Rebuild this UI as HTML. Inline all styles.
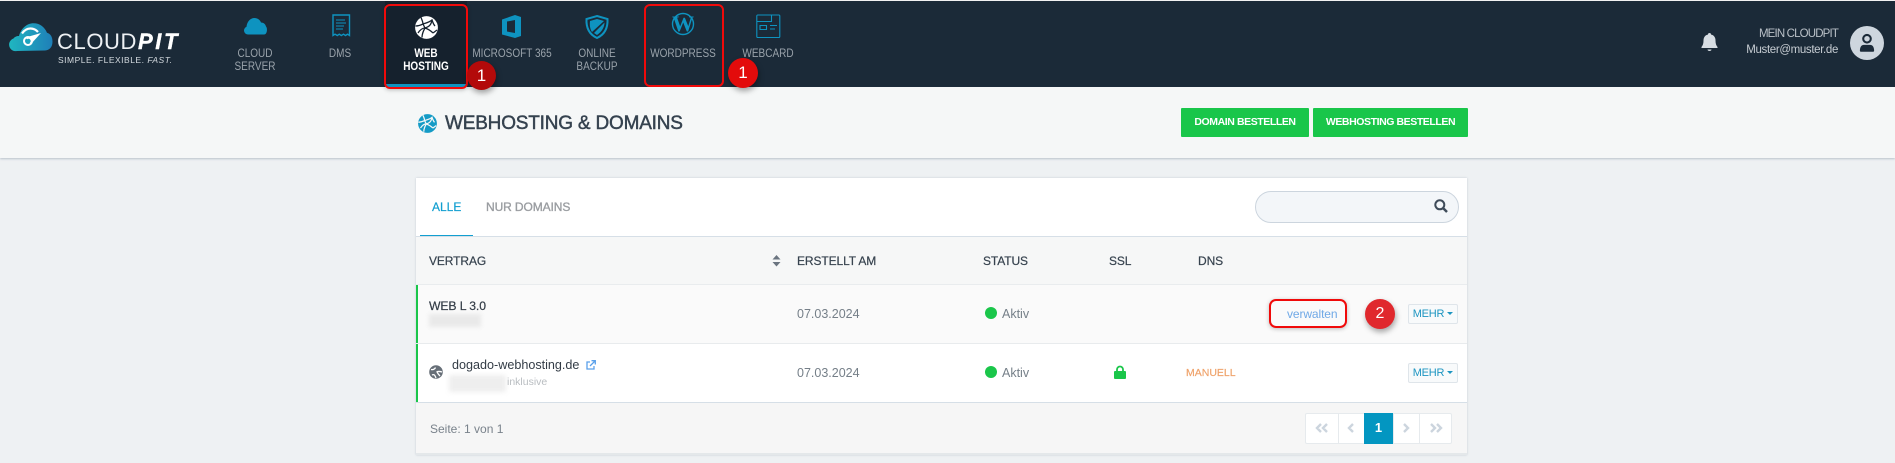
<!DOCTYPE html>
<html lang="de"><head><meta charset="utf-8"><title>Webhosting</title>
<style>
html,body{margin:0;padding:0;width:1895px;height:463px;overflow:hidden;background:#eef1f3;font-family:"Liberation Sans",sans-serif}
.a{position:absolute}
.t{position:absolute;white-space:nowrap}
.c{transform:translateX(-50%);text-align:center}
.nav{font-size:11.5px;color:#9aa3ab;line-height:13px;top:47.5px;transform:translateX(-50%) scaleX(.87);text-align:center}
svg{position:absolute;overflow:visible}
.th{font-size:12px;color:#36424e;top:254px;letter-spacing:-.1px;-webkit-text-stroke:.2px #36424e}
.d{font-size:12.5px;color:#757f88}
.badge{position:absolute;border-radius:50%;color:#fff;text-align:center;box-shadow:1px 3px 6px rgba(0,0,0,.35);font-size:17px}
.btn{position:absolute;background:#19c64a;color:#fff;font-weight:bold;font-size:10.5px;text-align:center;border-radius:1px;top:108px;height:29px;line-height:28px;letter-spacing:-.42px}
.mehr{position:absolute;left:1408px;width:50px;height:20px;box-sizing:border-box;border:1px solid #dfe5ea;border-radius:2px;background:#f8fafb;color:#1d95c1;font-size:11px;line-height:18px;text-align:center;letter-spacing:-.2px}
.mehr i{display:inline-block;border:3px solid transparent;border-top-color:#1d95c1;border-bottom:0;margin-left:3px;vertical-align:2px}
.redbox{position:absolute;border:2px solid #f00a0a;border-radius:6px;box-sizing:border-box;box-shadow:0 1px 4px rgba(0,0,0,.25)}
</style></head><body>
<div class="a" style="left:0;top:0;width:1895px;height:1px;background:#f2f2f2"></div>
<div class="a" style="left:0;top:1px;width:1895px;height:86px;background:#1b2a38"></div>
<div class="a" style="left:0;top:87px;width:1895px;height:71px;background:#f5f7f7;box-shadow:0 1px 2px rgba(90,110,130,.35)"></div>

<!-- logo -->
<svg style="left:0;top:0" width="190" height="70" viewBox="0 0 190 70">
<defs><linearGradient id="g" x1="0" y1="0" x2="1" y2="0"><stop offset="0" stop-color="#1fb6c0"/><stop offset="1" stop-color="#1f7fb8"/></linearGradient></defs>
<path d="M17 51a6.500 6.500 0 0 1-3.500-12.500c1-1.500 3-2.500 5.500-2.500 2-7.500 8-12.700 14.500-12.700 6.500 0 11 3.700 13.500 9.500 3.500 1 5.500 4 5.500 9 0 5-3 8.700-7.500 8.700z" fill="url(#g)"/>
<path d="M22 33.500c2-3 5-5 8.500-5 3 0 5.500 1.200 7.500 3.500" fill="none" stroke="#fff" stroke-width="2.200"/>
<circle cx="28" cy="41" r="4" fill="none" stroke="#fff" stroke-width="2"/>
<path d="M41 33 25.500 37.500l5.500 6.500z" fill="#fff"/><circle cx="28.500" cy="41" r="2.200" fill="#1da5bd"/>
</svg>
<div class="t" style="left:57px;top:29px;font-size:22px;color:#eef1f4;letter-spacing:.6px;line-height:26px">CLOUD</div>
<div class="t" style="left:138px;top:29px;font-size:22px;color:#fff;font-weight:bold;font-style:italic;letter-spacing:2.6px;line-height:26px;-webkit-text-stroke:.4px #fff">PIT</div>
<div class="t" style="left:58px;top:55px;font-size:8.500px;color:#d5dbe0;letter-spacing:.5px;line-height:11px">SIMPLE. FLEXIBLE. <i>FAST.</i></div>

<!-- nav active -->
<div class="a" style="left:385px;top:1px;width:82px;height:83px;background:#15212d"></div>
<div class="a" style="left:385px;top:84px;width:82px;height:3px;background:#0e93c0"></div>
<div class="redbox" style="left:384px;top:4px;width:84px;height:85px"></div>
<div class="redbox" style="left:644px;top:4px;width:80px;height:83px;box-shadow:none"></div>

<!-- nav icons -->
<svg style="left:244px;top:17px" width="24" height="18" viewBox="0 0 24 18"><path d="M4 17.500a4 4 0 0 1-1.500-7.700C3 5 6 1 10.500 1c3 0 5.500 1.800 6.500 4.500 3 0 4.500 2 5 4 1.500 1 1.500 8-2 8z" fill="#0e93c0"/></svg>
<svg style="left:331px;top:14px" width="20" height="24" viewBox="0 0 20 24" fill="none" stroke="#0e93c0"><path d="M2 1h16.500v20.500l-2-1.300-2 1.300-2-1.300-2.200 1.300-2-1.300-2 1.300-2.300-1.300-2 1.300z" stroke-width="1.400"/><path d="M5 6h9M5 9h10M5 12h8M5 15h7" stroke-width="1"/></svg>
<svg style="left:415px;top:16px" width="23" height="23" viewBox="0 0 23 23"><circle cx="11.500" cy="11.500" r="11.400" fill="#fff"/><g fill="none" stroke="#15212d" stroke-width="1.300"><path d="M6 1.500C7 4 8 6 8 8 6 9 3 10 .5 10"/><path d="M8 8c3-1 7-2 9-4 1 3 2 5 3 6"/><path d="M3 17c2-3 4-5 7-5 3 1 6 3 8 5"/><path d="M8 8l2 4c3-1 6-2 7-8"/><path d="M7 21.500c0-3 1-6 3-9.500"/><path d="M18 17l4-3"/></g></svg>
<svg style="left:501px;top:15px" width="21" height="23" viewBox="0 0 21 23"><path fill-rule="evenodd" d="M1 4.500 14 0l6 2v19l-6 2-13-3.500zM6 6.500v10l8 1.500V5z" fill="#0e93c0"/></svg>
<svg style="left:585px;top:15px" width="24" height="24" viewBox="0 0 24 24"><path d="M12 1 22.500 4c.5 9-3 15.500-10.500 19C4.500 19.500 1 13 1.500 4z" fill="none" stroke="#0e93c0" stroke-width="2"/><path d="M5 6 12 4l7 2-12 11c-2-3-2.500-7-2-11zM19.500 7.500c0 4.500-2.500 9-7.500 12.500l-3-2z" fill="#0e93c0"/></svg>
<svg style="left:671px;top:12px" width="24" height="24" viewBox="0 0 24 24"><circle cx="12" cy="12" r="10.500" fill="none" stroke="#0e93c0" stroke-width="1.400"/></svg>
<div class="t c" style="left:683px;top:10px;font:bold 22px/28px 'Liberation Serif',serif;color:#0e93c0">W</div>
<svg style="left:756px;top:14px" width="25" height="25" viewBox="0 0 25 25" fill="none" stroke="#0e93c0" stroke-width="1.100"><rect x=".8" y="1" width="23" height="22.500" rx="1"/><path d="M1 7.500h14.500V1M4 11.500h6.500v4H4zM14 11.500h7M14 15h5"/></svg>

<!-- nav labels -->
<div class="t nav" style="left:255px;">CLOUD<br>SERVER</div>
<div class="t nav" style="left:340px;">DMS</div>
<div class="t nav" style="left:426px;color:#fff;font-weight:bold">WEB<br>HOSTING</div>
<div class="t nav" style="left:512px;">MICROSOFT 365</div>
<div class="t nav" style="left:597px;">ONLINE<br>BACKUP</div>
<div class="t nav" style="left:683px;">WORDPRESS</div>
<div class="t nav" style="left:768px;">WEBCARD</div>

<div class="badge" style="left:467px;top:61px;width:29px;height:29px;line-height:29px;background:#b30a0a">1</div>
<div class="badge" style="left:728px;top:58px;width:30px;height:30px;line-height:30px;background:#e30b0b">1</div>

<!-- right nav -->
<svg style="left:1701px;top:33px" width="17" height="19" viewBox="0 0 17 19"><path d="M8.500 0c1 0 1.500.6 1.500 1.500 3 .7 4.500 3 4.500 6 0 3 .7 5 2 6.500v1H.5v-1c1.300-1.500 2-3.500 2-6.500 0-3 1.500-5.300 4.500-6C7 .6 7.500 0 8.500 0zM6.500 16.500h4c0 1-1 1.500-2 1.500s-2-.5-2-1.500z" fill="#d7dde3"/></svg>
<div class="t" style="right:57px;top:27px;font-size:11.500px;color:#b9c0c7;letter-spacing:-.85px;line-height:14px">MEIN CLOUDPIT</div>
<div class="t" style="right:57px;top:43px;font-size:11.500px;color:#c6ccd2;letter-spacing:-.35px;line-height:14px">Muster@muster.de</div>
<div class="a" style="left:1850px;top:26px;width:34px;height:34px;border-radius:50%;background:#ced6de"></div>
<svg style="left:1859px;top:34px" width="16" height="18" viewBox="0 0 16 19"><circle cx="8" cy="5" r="4" fill="none" stroke="#1b2a38" stroke-width="2.200"/><path d="M.5 17.500c0-4 2-6 4-6h7c2 0 4 2 4 6 0 .7-.5 1.200-1 1.200H1.500c-.5 0-1-.5-1-1.200z" fill="#1b2a38"/></svg>

<!-- sub header -->
<svg style="left:418px;top:114px" width="19" height="19" viewBox="0 0 23 23"><circle cx="11.500" cy="11.500" r="11.400" fill="#149bc6"/><g fill="none" stroke="#f5f7f7" stroke-width="1.500"><path d="M6 1.500C7 4 8 6 8 8 6 9 3 10 .5 10"/><path d="M8 8c3-1 7-2 9-4 1 3 2 5 3 6"/><path d="M3 17c2-3 4-5 7-5 3 1 6 3 8 5"/><path d="M8 8l2 4c3-1 6-2 7-8"/><path d="M7 21.500c0-3 1-6 3-9.500"/><path d="M18 17l4-3"/></g></svg>
<div class="t" style="left:445px;top:113px;font-size:19px;line-height:22px;color:#35424f;letter-spacing:-.2px;-webkit-text-stroke:.45px #35424f">WEBHOSTING &amp; DOMAINS</div>
<div class="btn" style="left:1181px;width:128px">DOMAIN BESTELLEN</div>
<div class="btn" style="left:1313px;width:155px">WEBHOSTING BESTELLEN</div>

<!-- card -->
<div class="a" style="left:416px;top:178px;width:1051px;height:277px;background:#fff;box-shadow:0 0 2px rgba(100,120,140,.3)"></div>
<div class="t" style="left:432px;top:200px;font-size:12px;color:#129fd0;line-height:15px;-webkit-text-stroke:.2px #129fd0">ALLE</div>
<div class="t" style="left:486px;top:200px;font-size:12px;color:#9a9da1;line-height:15px;letter-spacing:-.1px;-webkit-text-stroke:.35px #9a9da1">NUR DOMAINS</div>
<div class="a" style="left:420px;top:235px;width:53px;height:1px;background:#129fd0"></div>
<div class="a" style="left:1255px;top:191px;width:204px;height:32px;border:1px solid #ccd5de;border-radius:16px;background:#f3f6f9;box-sizing:border-box"></div>
<svg style="left:1434px;top:199px" width="14" height="14" viewBox="0 0 14 14" fill="none" stroke="#3f4c5a"><circle cx="5.800" cy="5.800" r="4.500" stroke-width="2"/><path d="M9 9l4 4" stroke-width="2.500"/></svg>

<div class="a" style="left:416px;top:236px;width:1051px;height:49px;background:#f6f7f7;border-top:1px solid #d6dfe7;box-sizing:border-box;border-bottom:1px solid #e9ecee"></div>
<div class="t th" style="left:429px;">VERTRAG</div>
<svg style="left:772px;top:255px" width="9" height="12" viewBox="0 0 9 12" fill="#6b7580"><path d="M4.500 0 8.500 4.500H.5zM.5 7h8L4.500 11.500z"/></svg>
<div class="t th" style="left:797px;">ERSTELLT AM</div>
<div class="t th" style="left:983px;">STATUS</div>
<div class="t th" style="left:1109px;">SSL</div>
<div class="t th" style="left:1198px;">DNS</div>

<!-- row 1 -->
<div class="a" style="left:416px;top:285px;width:1051px;height:58px;background:#fafafa"></div>
<div class="a" style="left:416px;top:343px;width:1051px;height:1px;background:#e8ebed"></div>
<div class="a" style="left:416px;top:285px;width:2px;height:58px;background:#1ac64a"></div>
<div class="t" style="left:429px;top:299px;font-size:12.200px;line-height:15px;color:#333c46;letter-spacing:-.1px;-webkit-text-stroke:.2px #333c46">WEB L 3.0</div>
<div class="a" style="left:429px;top:314px;width:52px;height:13px;background:#e9e9e9;filter:blur(2px)"></div>
<div class="t d" style="left:797px;top:307px;line-height:15px">07.03.2024</div>
<div class="a" style="left:985px;top:307px;width:12px;height:12px;border-radius:50%;background:#1ac64a"></div>
<div class="t d" style="left:1002px;top:307px;line-height:15px">Aktiv</div>
<div class="t" style="left:1287px;top:307px;font-size:12px;line-height:15px;color:#6fa8e6;letter-spacing:-.1px">verwalten</div>
<div class="redbox" style="left:1269px;top:299px;width:78px;height:29px;border-radius:7px"></div>
<div class="badge" style="left:1365px;top:299px;width:30px;height:30px;line-height:30px;background:#e0282d;font-size:16px">2</div>
<div class="mehr" style="top:304px">MEHR<i></i></div>

<!-- row 2 -->
<div class="a" style="left:416px;top:344px;width:2px;height:58px;background:#1ac64a"></div>
<svg style="left:429px;top:365px" width="14" height="14" viewBox="0 0 14 14"><circle cx="7" cy="7" r="6.800" fill="#676f78"/><path d="M2 4.500C4 5 6 4 6.500 2.500M7.500 7c2-1 4-.5 5.500 0M3 10c2-1 3 0 4 3M8 7c1 2 2 3 3 4" fill="none" stroke="#fff" stroke-width="1.300"/></svg>
<div class="t" style="left:452px;top:357px;font-size:12.600px;line-height:16px;color:#333c46">dogado-webhosting.de</div>
<svg style="left:586px;top:360px" width="10" height="10" viewBox="0 0 10 10" fill="none" stroke="#5aa0ea" stroke-width="1.300"><path d="M8 6v3H1V2h3M5.500.7h3.800v3.800M9 1 4 6"/></svg>
<div class="a" style="left:449px;top:375px;width:57px;height:17px;background:#eeeeee;filter:blur(2.500px)"></div>
<div class="t" style="left:507px;top:375px;font-size:10.500px;line-height:14px;color:#b9bdc1">inklusive</div>
<div class="t d" style="left:797px;top:366px;line-height:15px">07.03.2024</div>
<div class="a" style="left:985px;top:366px;width:12px;height:12px;border-radius:50%;background:#1ac64a"></div>
<div class="t d" style="left:1002px;top:366px;line-height:15px">Aktiv</div>
<svg style="left:1114px;top:366px" width="12" height="13" viewBox="0 0 12 13"><rect x="0" y="5" width="12" height="8" rx="1" fill="#1ac64a"/><path d="M3 6V3.500a3 3 0 0 1 6 0V6" fill="none" stroke="#1ac64a" stroke-width="1.800"/></svg>
<div class="t" style="left:1186px;top:366px;font-size:10.500px;line-height:15px;color:#efa36b;-webkit-text-stroke:.2px #efa36b">MANUELL</div>
<div class="mehr" style="top:363px">MEHR<i></i></div>

<!-- footer -->
<div class="a" style="left:416px;top:402px;width:1051px;height:53px;background:#f6f6f6;border-top:1px solid #d6dfe7;border-bottom:2px solid #e4e8ea;box-sizing:border-box"></div>
<div class="t" style="left:430px;top:422px;font-size:12px;line-height:15px;color:#79828b">Seite: 1 von 1</div>
<div class="a" style="left:1305px;top:413px;width:147px;height:31px;background:#fff;border:1px solid #e6eaed;box-sizing:border-box;border-radius:2px"></div>
<div class="a" style="left:1338px;top:413px;width:1px;height:31px;background:#e6eaed"></div>
<div class="a" style="left:1393px;top:413px;width:1px;height:31px;background:#e6eaed"></div>
<div class="a" style="left:1419px;top:413px;width:1px;height:31px;background:#e6eaed"></div>
<div class="a" style="left:1364px;top:413px;width:29px;height:31px;background:#0396c1;color:#fff;font-size:13px;font-weight:bold;text-align:center;line-height:30px">1</div>
<svg style="left:1305px;top:413px" width="147" height="31" fill="none" stroke="#ccd5de" stroke-width="2.400"><path d="M16 11l-4 4 4 4M22 11l-4 4 4 4M48 11l-4 4 4 4M99 11l4 4-4 4M126 11l4 4-4 4M132 11l4 4-4 4"/></svg>
</body></html>
